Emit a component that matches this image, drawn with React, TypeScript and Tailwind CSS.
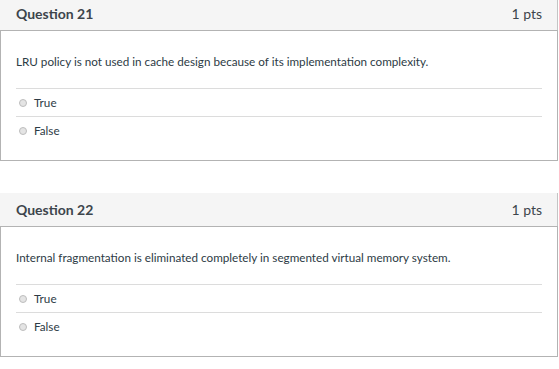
import React from "react";

type Q = { title: string; text: string };

const questions: Q[] = [
  { title: "Question 21", text: "LRU policy is not used in cache design because of its implementation complexity." },
  { title: "Question 22", text: "Internal fragmentation is eliminated completely in segmented virtual memory system." },
];

function Radio() {
  return <span className="inline-block w-[8px] h-[8px] rounded-full border border-[#bdbdbd] bg-[#e4e4e4]" />;
}

function Card({ q }: { q: Q }) {
  return (
    <div className="w-[558px]">
      <div className="h-[33px] bg-[#f5f5f5] border-r border-[#c4c4c4] flex items-center justify-between pl-[16px] pr-[15px]">
        <span className="text-[14px] font-bold text-[#3d454c]">{q.title}</span>
        <span className="text-[14px] text-[#3d454c]">1 pts</span>
      </div>
      <div className="border border-[#b3b3b3] px-[15px] pt-[23px] pb-[15px]">
        <div className="text-[11.7px] text-[#2d3b45] h-[14px] leading-[14px]">{q.text}</div>
        <div className="mt-[20px] border-t border-[#dcdcdc]">
          <div className="h-[28px] flex items-center gap-[7px] pl-[3px] text-[11.7px] text-[#2d3b45] border-b border-[#dcdcdc]">
            <Radio />
            <span>True</span>
          </div>
          <div className="h-[28px] flex items-center gap-[7px] pl-[3px] text-[11.7px] text-[#2d3b45]">
            <Radio />
            <span>False</span>
          </div>
        </div>
      </div>
    </div>
  );
}

export default function App() {
  return (
    <div className="w-[559px] h-[369px] overflow-hidden bg-white">
      <div className="-mt-[3px] flex flex-col gap-[32px]" style={{ fontFamily: "Lato, 'Liberation Sans', sans-serif" }}>
        {questions.map((q) => (
          <Card key={q.title} q={q} />
        ))}
      </div>
    </div>
  );
}
